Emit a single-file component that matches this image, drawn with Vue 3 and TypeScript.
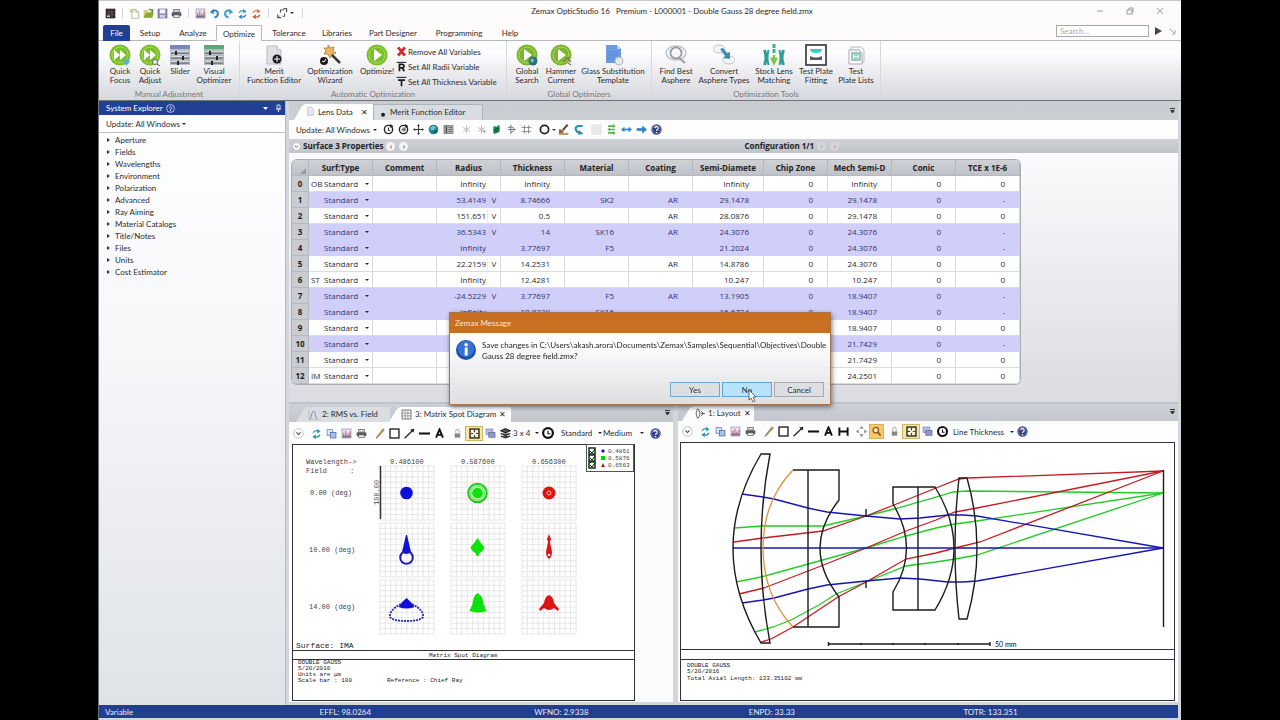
<script setup lang="ts">
import { ref } from 'vue'

const icons: Record<string, string> = {
  app: '<rect x="1" y="1" width="14" height="14" fill="#2c2628"/><path d="M2 6h12M2 10h12M6 2v12M10 2v12" stroke="#6d5f63" stroke-width="1"/><rect x="3" y="11" width="4" height="2" fill="#ddd"/>',
  newFile: '<path d="M4 2h6l4 4v9H4z" fill="#fff" stroke="#9a9a8e"/><path d="M10 2v4h4" fill="none" stroke="#9a9a8e"/><circle cx="4" cy="4" r="3" fill="#b9dd7b"/>',
  open: '<path d="M1 3h5l2 2h6v9H1z" fill="#e3cf6b"/><path d="M1 14l3-7h12l-3 7z" fill="#7fae3a"/><path d="M9 2l5 1-1 4" fill="none" stroke="#3d8b37" stroke-width="2"/>',
  save: '<rect x="1.500" y="1.500" width="13" height="13" fill="#8d83b4" stroke="#6d648e"/><rect x="4" y="2" width="8" height="6" fill="#f4f2fa"/><rect x="4" y="10" width="8" height="4" fill="#d6d2e6"/>',
  print: '<rect x="4" y="2" width="8" height="4" fill="#ddd" stroke="#555"/><rect x="1" y="6" width="14" height="6" rx="1" fill="#565a60"/><rect x="4" y="10" width="8" height="4" fill="#eee" stroke="#555"/>',
  chart: '<rect x="1.500" y="1.500" width="13" height="13" fill="#ece6ee" stroke="#9187a5"/><path d="M4 13V7M7 13V4M10 13V8M13 13V5" stroke="#b5606c" stroke-width="1.500"/><rect x="2" y="11" width="12" height="3" fill="#7d6f91"/>',
  undo: '<path d="M4 5c5-3 9-1 9 3 0 3-2 5-5 6" fill="none" stroke="#2d8cb8" stroke-width="3"/><path d="M1 6l6-5v8z" fill="#2d8cb8"/>',
  redo: '<path d="M12 5C7 2 3 4 3 8c0 3 2 5 5 6" fill="none" stroke="#3ba3cf" stroke-width="3"/><path d="M15 6L9 1v8z" fill="#3ba3cf"/>',
  refresh: '<path d="M3 7q2-4 7-3" fill="none" stroke="#25a3a8" stroke-width="2"/><path d="M9 1l5 4-5 3z" fill="#25a3a8"/><path d="M13 10q-2 4-7 3" fill="none" stroke="#2d8cb8" stroke-width="2"/><path d="M7 9l-5 4 5 3z" fill="#2d8cb8"/>',
  refreshOrange: '<path d="M3 7q2-4 7-3" fill="none" stroke="#dd7a4a" stroke-width="2"/><path d="M9 1l5 4-5 3z" fill="#dd7a4a"/><path d="M13 10q-2 4-7 3" fill="none" stroke="#c7603a" stroke-width="2"/><path d="M7 9l-5 4 5 3z" fill="#c7603a"/>',
  link: '<path d="M1 9v5h5M5 7V3h5M8 12h3V8" fill="none" stroke="#555" stroke-width="1.500"/><path d="M9 1h5v5" fill="none" stroke="#333" stroke-width="1.500"/><path d="M1 14l3-3" stroke="#333"/>',
  focus: '<circle cx="11" cy="11" r="10.500" fill="#7cc028"/><circle cx="11" cy="11" r="8" fill="none" stroke="#a5da62" stroke-width="1"/><path d="M5 6l6 5-6 5zM11 6l6 5-6 5z" fill="#fff"/><path d="M14 17l5-3 2 4-4 4z" fill="#5db4c6"/>',
  adjust: '<circle cx="11" cy="11" r="10.500" fill="#7cc028"/><circle cx="11" cy="11" r="8" fill="none" stroke="#a5da62" stroke-width="1"/><path d="M5 6l6 5-6 5zM11 6l6 5-6 5z" fill="#fff"/><circle cx="16" cy="18" r="2.500" fill="#eef" stroke="#666"/><path d="M18 20l3 2" stroke="#555"/>',
  slider: '<rect x="1" y="1" width="20" height="20" fill="#b9bec6"/><rect x="1" y="1" width="20" height="4" fill="#7488bd"/><path d="M2 8h18M2 13h18M2 18h18" stroke="#fff"/><path d="M2 9h18M2 14h18M2 19h18" stroke="#454b55"/><path d="M7 7v4M14 12v4M9 17v4" stroke="#222" stroke-width="2"/>',
  visual: '<rect x="1" y="1" width="20" height="20" fill="#b4bab9"/><rect x="1" y="1" width="20" height="4" fill="#5aa777"/><path d="M2 8h18M2 13h18M2 18h18" stroke="#fff"/><path d="M2 9h18M2 14h18M2 19h18" stroke="#454b55"/><path d="M7 7v4M14 12v4M9 17v4" stroke="#222" stroke-width="2"/>',
  merit: '<path d="M4 2h10l4 4v14H4z" fill="#e0e1e6" stroke="#b6b8be"/><path d="M14 2v4h4" fill="#fff" stroke="#b6b8be"/><circle cx="14" cy="15" r="4.500" fill="#1b1b1b"/><path d="M11 15h6M14 12v6" stroke="#fff" stroke-width="1"/>',
  wizard: '<path d="M11 9l10 10" stroke="#3b3734" stroke-width="2.500"/><path d="M9 1l2 3 4-1-1 4 3 2-4 1-2 4-2-4-4 0 2-3-2-3 4 0z" fill="#ecb862" stroke="#b5713a" stroke-width=".8"/><circle cx="5" cy="17" r="4" fill="#1b1b1b"/><path d="M3 17l2 1 2-3" stroke="#fff" fill="none"/>',
  optimize: '<circle cx="11" cy="11" r="10.500" fill="#7cc028"/><circle cx="11" cy="11" r="8" fill="none" stroke="#a5da62" stroke-width="1"/><path d="M8 5l8 6-8 6z" fill="#fff"/>',
  globalSearch: '<circle cx="11" cy="11" r="10.500" fill="#7cb62c"/><circle cx="11" cy="11" r="8" fill="none" stroke="#a5da62" stroke-width="1"/><path d="M8 5l8 6-8 6z" fill="#fff"/><circle cx="17" cy="17" r="4.500" fill="#2a6f86"/><path d="M14 16l3-2 1 3-2 2z" fill="#7bc3a7"/>',
  hammer: '<circle cx="11" cy="11" r="10.500" fill="#7cb62c"/><circle cx="11" cy="11" r="8" fill="none" stroke="#a5da62" stroke-width="1"/><path d="M8 5l8 6-8 6z" fill="#fff"/><path d="M13 18l6-5M17 14l4 4M18 19l3 2" stroke="#8a785f" stroke-width="1.500"/>',
  glass: '<path d="M4 1h11l4 4v14H4z" fill="#6a9ae0"/><path d="M15 1v4h4z" fill="#b7d0f3"/><path d="M6 8h10M6 11h10M6 14h10" stroke="#5d8bd3"/><circle cx="17" cy="17" r="4" fill="#e8eaee" stroke="#b3b8c0"/>',
  asphere: '<ellipse cx="11" cy="9" rx="10" ry="7" fill="#eceef0" stroke="#bcc0c4" stroke-width="1.300"/><circle cx="11" cy="9" r="5.500" fill="#f5f7f8" stroke="#8c9196" stroke-width="1.500"/><path d="M14 14l6 5" stroke="#9ba0a5" stroke-width="2"/>',
  convert: '<ellipse cx="6" cy="5" rx="6" ry="4" fill="#f3f4f5" stroke="#bfc3c7"/><ellipse cx="16" cy="16" rx="6" ry="4" fill="#f3f4f5" stroke="#bfc3c7"/><path d="M7 5l3-1 4 5 3-1v7l-7-1 2-2z" fill="#3c8fb0"/>',
  stock: '<path d="M1.500 6q3 8 0 15M20.500 6q-3 8 0 15" stroke="#2f9d98" stroke-width="3" fill="none"/><path d="M5.500 6q-2 8 0 15M16.500 6q2 8 0 15" stroke="#2f9d98" stroke-width="2" fill="none"/><path d="M11 0v9" stroke="#3cb48b" stroke-width="3" stroke-dasharray="4 1"/><path d="M11 11v5M9 15h4l-2 4z" stroke="#7cc542" stroke-width="2.500" fill="#7cc542"/>',
  plate: '<rect x="1" y="1" width="20" height="20" fill="#fff" stroke="#44484d" stroke-width="1.800"/><path d="M5 5h12q0 4-6 4T5 5z" fill="#2fd2c0"/><path d="M5 12q6 3 12 0v4H5z" fill="#565b60"/>',
  lists: '<path d="M6 3h10l3 3v12H6z" fill="#f6f6f8" stroke="#b9bcc2"/><path d="M4 6h10l3 3v11H4z" fill="#fdfdfd" stroke="#a5a9b1"/><rect x="7" y="9" width="8" height="7" fill="#e8f7f4" stroke="#4b8f8a"/><path d="M9 11h4M9 14h4" stroke="#36b9a4"/>',
  remove: '<path d="M3 2l10 12M13 2L3 14" stroke="#cf2a32" stroke-width="4"/>',
  radii: '<path d="M1 2h14" stroke="#222" stroke-width="1.500"/><path d="M5 15V5h4a2.500 2.500 0 0 1 0 5H5M9 10l3 5" fill="none" stroke="#1c1c1c" stroke-width="2.500"/>',
  thick: '<path d="M1 2h14" stroke="#222" stroke-width="1.500"/><path d="M3 6h10M8 6v9" fill="none" stroke="#1c1c1c" stroke-width="2.500"/>',
  rotC: '<circle cx="8" cy="8" r="6" fill="none" stroke="#222" stroke-width="2"/><path d="M8 5v4l2 1" stroke="#222" stroke-width="1.500" fill="none"/><path d="M10 0l5 3-4 3z" fill="#222"/>',
  rotE: '<circle cx="8" cy="8" r="6" fill="none" stroke="#222" stroke-width="2"/><path d="M5 8h6M6 6h4v4H6" stroke="#222" fill="none"/><path d="M10 0l5 3-4 3z" fill="#222"/>',
  plus: '<path d="M8 1v14M1 8h14" stroke="#333" stroke-width="1.500"/><path d="M8 0l2 3H6zM8 16l2-3H6zM0 8l3-2v4zM16 8l-3-2v4z" fill="#333"/>',
  globe: '<circle cx="8" cy="8" r="7" fill="#1d7f9b"/><path d="M3 5l5-3 4 3-4 4-4 0z" fill="#6cc1c9"/><path d="M8 11l4-2 2 1-4 4z" fill="#1d5b45"/>',
  image: '<rect x="1.500" y="2.500" width="13" height="11" fill="#b8b8ba" stroke="#555"/><path d="M8 5h5M8 8h5M8 11h5" stroke="#444"/><path d="M5 3v10" stroke="#444" stroke-width="2"/>',
  starGrey: '<path d="M8 2v12M3 5l10 6M13 5L3 11" stroke="#b5b5b5" stroke-width="1.300"/>',
  starRed: '<path d="M8 2v12M3 5l10 6M13 5L3 11" stroke="#b5b5b5" stroke-width="1.300"/><circle cx="12" cy="11" r="1.800" fill="#d88b97"/>',
  greenBox: '<path d="M4 3l4 1 4-3 1 6-1 5-4 1-4 2-1-6z" fill="#1c8a4c"/><path d="M6 8c1-2 3-2 4 0M10 10c-1 1-3 1-4-1" stroke="#0d4a26" fill="none" stroke-width="1.500"/>',
  solveA: '<path d="M7 1v14M7 4q5 1 5 4t-5 4M3 8h11M3 5h4" stroke="#687178" stroke-width="1.300" fill="none"/>',
  solveB: '<path d="M5 2v12M11 2v12M1 5h14M1 11h14" stroke="#7d858b" stroke-width="1.300" fill="none"/>',
  ring: '<circle cx="8" cy="8" r="6" fill="none" stroke="#222" stroke-width="2.500"/>',
  brush: '<path d="M14 1L7 9" stroke="#5a3d2a" stroke-width="3"/><path d="M2 7l7 4-3 2H1z" fill="#96602f"/><path d="M1 14.500h14" stroke="#b3622f" stroke-width="2"/>',
  swoosh: '<path d="M14 3H8Q3 4 4 8q2 5 7 5" fill="none" stroke="#2a8db0" stroke-width="3"/><path d="M9 9l6 5-7 2z" fill="#2a8db0"/>',
  gridPale: '<rect x="1.500" y="1.500" width="13" height="13" fill="#f1f2f4" stroke="#d2d5d8"/><path d="M2 6h12M2 10h12M6 2v12M10 2v12" stroke="#dadce0"/>',
  greenLines: '<path d="M3 3h8M6 8h7M3 13h8" stroke="#57b847" stroke-width="2.500"/><path d="M10 0l4 3-4 3zM6 5L2 8l4 3zM10 10l4 3-4 3z" fill="#57b847"/>',
  both: '<path d="M3 8h10" stroke="#2e86c9" stroke-width="2.500"/><path d="M5 4L0 8l5 4zM11 4l5 4-5 4z" fill="#2e86c9"/>',
  right: '<path d="M1 8h9" stroke="#2e86c9" stroke-width="4"/><path d="M9 2l7 6-7 6z" fill="#2e86c9"/>',
  help: '<circle cx="8" cy="8" r="7.500" fill="#323d86"/><circle cx="8" cy="8" r="6" fill="none" stroke="#8d96cf"/><path d="M5.500 6a2.500 2.500 0 1 1 3.500 2.500q-1 .5-1 1.500M8 11.500v1.500" fill="none" stroke="#fff" stroke-width="1.700"/>',
  chevron: '<circle cx="8" cy="8" r="7" fill="#fdfdfd" stroke="#aaa"/><path d="M5 6.500l3 3 3-3" fill="none" stroke="#444" stroke-width="1.500"/>',
  copy: '<rect x="1.500" y="2.500" width="8" height="8" fill="#dfe8f7" stroke="#4a6fae"/><rect x="6.500" y="6.500" width="8" height="8" fill="#a9c2e8" stroke="#3d5f9e"/>',
  pencil: '<path d="M13 1L4 13l-1 2 2-1L15 3z" fill="#c8a04f" stroke="#6e5b33" stroke-width=".8"/>',
  rect: '<rect x="1.500" y="1.500" width="13" height="13" fill="none" stroke="#222" stroke-width="2"/>',
  arrow: '<path d="M1 15L12 4" stroke="#222" stroke-width="1.800"/><path d="M9 2l6-1-1 6z" fill="#222"/>',
  line: '<path d="M0 8h16" stroke="#111" stroke-width="3"/>',
  letterA: '<path d="M3 14L8 2l5 12M5 10h6" fill="none" stroke="#111" stroke-width="2.800"/>',
  span: '<path d="M2 2v12M14 2v12M2 8h12" stroke="#111" stroke-width="2.800"/>',
  lock: '<path d="M5.500 8V4.500a2.500 2.500 0 0 1 5 0V8" fill="none" stroke="#b5b8aa" stroke-width="1.500"/><rect x="4" y="8" width="8" height="6" fill="#84887c"/>',
  expand: '<rect x="1.500" y="1.500" width="13" height="13" fill="#fbf3d2" stroke="#222" stroke-width="2"/><path d="M8 3v3M8 10v3M3 8h3M10 8h3" fill="none" stroke="#333" stroke-width="1.600"/>',
  windows: '<rect x="1.500" y="1.500" width="10" height="8" fill="#b8c0dd" stroke="#7a84b5"/><rect x="5.500" y="6.500" width="9" height="7" fill="#8f9ac4" stroke="#5660a0"/>',
  layers: '<path d="M8 1l7 3-7 3-7-3zM1 8l7 3 7-3M1 11.500l7 3 7-3" fill="#555" stroke="#222" stroke-width="1.600"/>',
  clock: '<circle cx="8" cy="8" r="6.500" fill="#fff" stroke="#111" stroke-width="3"/><path d="M8 5v4h3" fill="none" stroke="#111" stroke-width="1.500"/>',
  move: '<path d="M8 0l3 4H5zM8 16l3-4H5zM0 8l4-3v6zM16 8l-4-3v6z" fill="#85888e"/>',
  magnify: '<circle cx="7" cy="6" r="4" fill="#fbe8b4" stroke="#8a5a1d" stroke-width="1.800"/><path d="M10 9l4 5" stroke="#8a5a1d" stroke-width="2.500"/>',
  page: '<path d="M3 1h7l3 3v11H3z" fill="#eef0f5" stroke="#a2a6b0"/><path d="M5 6h6M5 9h6M5 12h6" stroke="#c5c8cf"/>',
  dot: '<circle cx="9" cy="12" r="3.500" fill="#222"/>',
  curve: '<path d="M1.500 1v14H15" fill="none" stroke="#aaa"/><path d="M2 14c4 0 3-11 6-11s2 11 6 11" fill="none" stroke="#7186b8" stroke-width="1.300"/>',
  matrix: '<rect x="1.500" y="1.500" width="13" height="13" fill="#fff" stroke="#444"/><path d="M6 1v14M10 1v14M1 6h14M1 10h14" stroke="#777"/>',
  lens: '<path d="M5 1q-4 7 0 14M6 1q5 7 0 14M10 8h6M10 4l4 4-4 4" fill="none" stroke="#555" stroke-width="1.300"/>',
  info: '<circle cx="8" cy="8" r="8" fill="#1b4fae"/><circle cx="8" cy="7" r="6.500" fill="#3673d3"/><rect x="7" y="6" width="2.300" height="6.500" fill="#fff"/><circle cx="8.100" cy="3.800" r="1.400" fill="#fff"/>',
}

const quick = ['app', '|', 'newFile', 'open', 'save', 'print', '|', 'chart', 'undo', 'redo', 'refresh', 'refreshOrange', '|', 'link', '|']

const menus = [
  { label: 'File', w: 'w27' },
  { label: 'Setup', w: 'w40' },
  { label: 'Analyze', w: 'w46' },
  { label: 'Optimize', w: 'w46' },
  { label: 'Tolerance', w: 'w54' },
  { label: 'Libraries', w: 'w42' },
  { label: 'Part Designer', w: 'w70' },
  { label: 'Programming', w: 'w62' },
  { label: 'Help', w: 'w40' },
]
const activeMenu = ref('Optimize')

interface Tool { icon: string; lines: string[]; w: string }
interface Group { title: string; tools: Tool[]; small?: { icon: string; label: string }[] }
const groups: Group[] = [
  {
    title: 'Manual Adjustment',
    tools: [
      { icon: 'focus', lines: ['Quick', 'Focus'], w: 'w30' },
      { icon: 'adjust', lines: ['Quick', 'Adjust'], w: 'w30' },
      { icon: 'slider', lines: ['Slider'], w: 'w30' },
      { icon: 'visual', lines: ['Visual', 'Optimizer'], w: 'w38' },
    ],
  },
  {
    title: 'Automatic Optimization',
    tools: [
      { icon: 'merit', lines: ['Merit', 'Function Editor'], w: 'w56' },
      { icon: 'wizard', lines: ['Optimization', 'Wizard'], w: 'w56' },
      { icon: 'optimize', lines: ['Optimize!'], w: 'w38' },
    ],
    small: [
      { icon: 'remove', label: 'Remove All Variables' },
      { icon: 'radii', label: 'Set All Radii Variable' },
      { icon: 'thick', label: 'Set All Thickness Variable' },
    ],
  },
  {
    title: 'Global Optimizers',
    tools: [
      { icon: 'globalSearch', lines: ['Global', 'Search'], w: 'w34' },
      { icon: 'hammer', lines: ['Hammer', 'Current'], w: 'w34' },
      { icon: 'glass', lines: ['Glass Substitution', 'Template'], w: 'w70' },
    ],
  },
  {
    title: 'Optimization Tools',
    tools: [
      { icon: 'asphere', lines: ['Find Best', 'Asphere'], w: 'w42' },
      { icon: 'convert', lines: ['Convert', 'Asphere Types'], w: 'w54' },
      { icon: 'stock', lines: ['Stock Lens', 'Matching'], w: 'w46' },
      { icon: 'plate', lines: ['Test Plate', 'Fitting'], w: 'w38' },
      { icon: 'lists', lines: ['Test', 'Plate Lists'], w: 'w42' },
    ],
  },
]

const tree = ['Aperture', 'Fields', 'Wavelengths', 'Environment', 'Polarization', 'Advanced', 'Ray Aiming', 'Material Catalogs', 'Title/Notes', 'Files', 'Units', 'Cost Estimator']

const lensTools = ['rotC', 'rotE', 'plus', 'globe', 'image', '|', 'starGrey', 'starRed', 'greenBox', 'solveA', 'solveB', '|', 'ring', '▾', 'brush', 'swoosh', '|', 'gridPale', 'greenLines', 'both', 'right', 'help']
const spotTools = ['chevron', '|', 'refresh', 'copy', 'chart', 'print', '|', 'pencil', 'rect', 'arrow', 'line', 'letterA', '|', 'lock', 'expand', 'windows', 'layers']
const layoutTools = ['chevron', '|', 'refresh', 'copy', 'chart', 'print', '|', 'pencil', 'rect', 'arrow', 'line', 'letterA', 'span', '|', 'move', 'magnify', '|', 'lock', 'expand', 'windows', 'clock']

const columns = ['Surf:Type', 'Comment', 'Radius', 'Thickness', 'Material', 'Coating', 'Semi-Diamete', 'Chip Zone', 'Mech Semi-D', 'Conic', 'TCE x 1E-6']

interface Row { tag: string; glass: boolean; flag: boolean; cells: string[] }
const row = (tag: string, glass: boolean, flag: boolean, ...cells: string[]): Row => ({ tag, glass, flag, cells })
const rows: Row[] = [
  row('OB', false, false, 'Infinity', 'Infinity', '', '', 'Infinity', '0', 'Infinity', '0', '0'),
  row('', true, true, '53.4149', '8.74666', 'SK2', 'AR', '29.1478', '0', '29.1478', '0', '-'),
  row('', false, true, '151.651', '0.5', '', 'AR', '28.0876', '0', '29.1478', '0', '0'),
  row('', true, true, '36.5343', '14', 'SK16', 'AR', '24.3076', '0', '24.3076', '0', '-'),
  row('', true, false, 'Infinity', '3.77697', 'F5', '', '21.2024', '0', '24.3076', '0', '-'),
  row('', false, true, '22.2159', '14.2531', '', 'AR', '14.8786', '0', '24.3076', '0', '0'),
  row('ST', false, false, 'Infinity', '12.4281', '', '', '10.247', '0', '10.247', '0', '0'),
  row('', true, true, '-24.5229', '3.77697', 'F5', 'AR', '13.1905', '0', '18.9407', '0', '-'),
  row('', true, false, 'Infinity', '10.8339', 'SK16', '', '16.6724', '0', '18.9407', '0', '-'),
  row('', false, false, '', '', '', '', '', '', '18.9407', '0', '0'),
  row('', true, false, '', '', '', '', '', '', '21.7429', '0', '-'),
  row('', false, false, '', '', '', '', '', '', '21.7429', '0', '0'),
  row('IM', false, false, '', '', '', '', '', '', '24.2501', '0', '0'),
]

const status = ['Variable', 'EFFL: 98.0264', 'WFNO: 2.9338', 'ENPD: 33.33', 'TOTR: 133.351']

const gridX = [380, 451, 522]
const gridY = [466, 523, 580]
const steps = [0, 1, 2, 3, 4, 5, 6, 7, 8, 9, 10]
const gridPath = (x: number, y: number) =>
  steps.map((s) => `M${x + s * 5.4} ${y}v54M${x} ${y + s * 5.4}h54`).join('')

const legend = [
  { y: 448, color: '#1010d8', value: '0.4861', shape: 'M601 451l2-2 2 2-2 2z' },
  { y: 455, color: '#00d800', value: '0.5876', shape: 'M601 456h4v4h-4z' },
  { y: 462, color: '#d01414', value: '0.6563', shape: 'M601 467l2-4 2 4z' },
]

const rays = [
  { color: '#22cc22', points: '734,528 762,526 823,526 866,516 894,509 936,497 953,492 967,491 1163,493' },
  { color: '#22cc22', points: '736,582 761,577 819,561 866,548 906,536 936,528 955,524 977,521 1163,493' },
  { color: '#22cc22', points: '755,632 773,627 791,620 819,605 836,594 866,582 906,566 936,562 955,559 977,555 1163,493' },
  { color: '#c81a22', points: '734,542 763,538 823,531 866,516 894,505 936,488 959,479 968,478 1163,471' },
  { color: '#c81a22', points: '739,594 764,588 821,566 866,548 906,531 936,520 955,512 977,508 1163,471' },
  { color: '#c81a22', points: '761,642 771,639 793,627 838,597 866,582 906,559 936,553 955,548 980,542 1163,471' },
  { color: '#1414b4', points: '742,494 763,497 774,499 808,508 827,512 866,516 900,519 920,518 948,515 963,515 977,516 1163,548' },
  { color: '#1414b4', points: '733,548 1163,548' },
  { color: '#1414b4', points: '742,603 763,600 774,598 808,589 827,585 866,581 900,578 920,579 948,582 963,582 977,581 1163,548' },
]
</script>

<template>
  <div class="screen">
    <div class="app">
      <header class="titlebar">
        <div class="quick">
          <template v-for="(q, i) in quick" :key="i">
            <span v-if="q === '|'" class="sep"></span>
            <button v-else class="ico" :class="{ wide: q === 'link' }" :aria-label="q">
              <svg viewBox="0 0 16 16" class="i11" v-html="icons[q]"></svg><span v-if="q === 'link'" class="caret"></span>
            </button>
          </template>
        </div>
        <h1>Zemax OpticStudio 16 &nbsp; Premium - L000001 - Double Gauss 28 degree field.zmx</h1>
        <div class="winbtns">
          <button aria-label="Minimize"><svg viewBox="0 0 8 8"><path d="M1 4h6" stroke="#999" /></svg></button>
          <button aria-label="Restore"><svg viewBox="0 0 8 8"><path d="M1 3h5v4H1zM3 3V1h4v4H6" fill="none" stroke="#999" /></svg></button>
          <button aria-label="Close"><svg viewBox="0 0 8 8"><path d="M1 1l6 6M7 1L1 7" stroke="#999" /></svg></button>
        </div>
      </header>

      <nav class="menus">
        <button v-for="m in menus" :key="m.label" :class="[m.w, { file: m.label === 'File', active: m.label === activeMenu }]" @click="activeMenu = m.label">{{ m.label }}</button>
        <div class="search">
          <input type="search" placeholder="Search..." aria-label="Search" />
          <button aria-label="Go"><svg viewBox="0 0 8 8"><path d="M0 0l7 4-7 4z" fill="#444" /></svg></button>
          <button aria-label="Collapse ribbon"><svg viewBox="0 0 8 8"><path d="M1 2l4 4M6 3v4H3" stroke="#aaa" fill="none" /></svg></button>
        </div>
      </nav>

      <section class="ribbon">
        <div v-for="g in groups" :key="g.title" class="group">
          <div class="tools">
            <button v-for="t in g.tools" :key="t.icon" class="tool" :class="t.w">
              <svg viewBox="0 0 22 22" v-html="icons[t.icon]"></svg>
              <span v-for="l in t.lines" :key="l">{{ l }}</span>
            </button>
            <div v-if="g.small" class="small">
              <button v-for="s in g.small" :key="s.label"><svg viewBox="0 0 16 16" v-html="icons[s.icon]"></svg>{{ s.label }}</button>
            </div>
          </div>
          <h2>{{ g.title }}</h2>
        </div>
      </section>

      <div class="workspace">
        <aside class="explorer">
          <div class="exhead">
            <h2>System Explorer</h2>
            <svg class="i9" viewBox="0 0 16 16"><circle cx="8" cy="8" r="7" fill="none" stroke="#cdd6f2" stroke-width="1.500" /><path d="M6 6a2 2 0 1 1 2 3v1M8 11v2" fill="none" stroke="#fff" stroke-width="1.500" /></svg>
            <span class="grow"></span>
            <button aria-label="Panel menu"><svg viewBox="0 0 8 8"><path d="M2 3h5L4.500 6z" fill="#fff" /></svg></button>
            <button aria-label="Pin panel"><svg viewBox="0 0 8 8"><path d="M3 1h3v4H3zM2 5h5M4.500 5v3" fill="none" stroke="#dde" /></svg></button>
          </div>
          <label class="pick update"><select aria-label="Update"><option>Update: All Windows</option></select></label>
          <ul>
            <li v-for="t in tree" :key="t"><button><span class="tri"></span>{{ t }}</button></li>
          </ul>
        </aside>

        <main>
          <section class="lens">
            <div class="tabs">
              <button class="tab active t75"><svg class="i9" viewBox="0 0 16 16" v-html="icons.page"></svg>Lens Data<span class="close">✕</span></button>
              <button class="tab second t108"><svg class="i9" viewBox="0 0 16 16" v-html="icons.dot"></svg>Merit Function Editor</button>
              <span class="grow"></span><span class="drop"></span>
            </div>
            <div class="bar">
              <label class="pick wupd"><select aria-label="Update lens data"><option>Update: All Windows</option></select></label>
              <template v-for="(q, i) in lensTools" :key="i">
                <span v-if="q === '|'" class="gap"></span>
                <span v-else-if="q === '▾'" class="caret tight"></span>
                <button v-else class="ico" :aria-label="q"><svg viewBox="0 0 16 16" class="i11" v-html="icons[q]"></svg></button>
              </template>
            </div>
            <div class="props">
              <button aria-label="Expand properties"><svg class="i9" viewBox="0 0 16 16" v-html="icons.chevron"></svg></button>
              <strong>Surface 3 Properties</strong>
              <button class="round" aria-label="Previous surface">‹</button><button class="round" aria-label="Next surface">›</button>
              <strong class="config">Configuration 1/1</strong>
              <button class="round dim" aria-label="Previous configuration">‹</button><button class="round dim" aria-label="Next configuration">›</button>
            </div>
            <div class="sheet">
              <table>
                <colgroup><col class="c17" /><col v-for="(c, i) in columns" :key="c" :class="i === 6 ? 'c71' : 'c64'" /></colgroup>
                <thead>
                  <tr><th class="corner"><svg viewBox="0 0 6 6"><path d="M6 0v6H0z" fill="#999" /></svg></th><th v-for="c in columns" :key="c" scope="col"><div>{{ c }}</div></th></tr>
                </thead>
                <tbody>
                  <tr v-for="(r, n) in rows" :key="n" :class="{ glass: r.glass }">
                    <th scope="row">{{ n }}</th>
                    <td><div class="type"><span class="tag">{{ r.tag }}</span><label class="pick"><select :aria-label="'Surface ' + n + ' type'"><option>Standard</option></select></label></div></td>
                    <td></td>
                    <td v-for="(c, i) in r.cells" :key="i"><div class="cell"><span>{{ c }}</span><i>{{ i === 0 && r.flag ? 'V' : '' }}</i></div></td>
                  </tr>
                </tbody>
              </table>
            </div>
          </section>

          <div class="panes">
            <section class="pane">
              <div class="tabs low">
                <button class="tab t100"><svg class="i11" viewBox="0 0 16 16" v-html="icons.curve"></svg>2: RMS vs. Field</button>
                <button class="tab active t119"><svg class="i11" viewBox="0 0 16 16" v-html="icons.matrix"></svg>3: Matrix Spot Diagram<span class="close">✕</span></button>
                <span class="grow"></span><span class="drop"></span>
              </div>
              <div class="bar tall">
                <template v-for="(q, i) in spotTools" :key="i">
                  <span v-if="q === '|'" class="gap"></span>
                  <button v-else class="ico" :class="{ lit: q === 'expand' }" :aria-label="q"><svg viewBox="0 0 16 16" class="i11" v-html="icons[q]"></svg></button>
                </template>
                <label class="pick w27"><select aria-label="Grid size"><option>3 x 4</option></select></label>
                <button class="ico" aria-label="Refresh timer"><svg viewBox="0 0 16 16" class="i12" v-html="icons.clock"></svg></button>
                <span class="gap"></span><span class="gap"></span>
                <label class="pick w42"><select aria-label="Style"><option>Standard</option></select></label>
                <label class="pick w42"><select aria-label="Size"><option>Medium</option></select></label>
                <span class="gap"></span>
                <button class="ico" aria-label="Help"><svg viewBox="0 0 16 16" class="i11" v-html="icons.help"></svg></button>
              </div>
              <div class="plot spot">
                <svg viewBox="292 444 343 258" role="img" aria-label="Matrix Spot Diagram">
                  <rect x="292.500" y="444.500" width="342" height="256" fill="#fff" stroke="#333" />
                  <g class="m7" fill="#444">
                    <text x="306" y="464">Wavelength-&gt;</text><text x="306" y="473">Field</text><text x="350" y="473">:</text>
                    <text x="390" y="464">0.486100</text><text x="461" y="464">0.587600</text><text x="532" y="464">0.656300</text>
                    <text x="310" y="495">0.00 (deg)</text><text x="309" y="552">10.00 (deg)</text><text x="309" y="609">14.00 (deg)</text>
                    <text transform="translate(379 505) rotate(-90)">100.00</text>
                  </g>
                  <template v-for="y in gridY" :key="y"><path v-for="x in gridX" :key="x" :d="gridPath(x, y)" fill="none" stroke="#e2e0df" stroke-width=".8" /></template>
                  <path d="M380.500 466v53" stroke="#333" stroke-width="1.500" />
                  <g fill="#0f0fdc">
                    <circle cx="406.500" cy="493" r="6.300" />
                    <path d="M406 535h1l4 17q-5 4-9 0z" />
                    <path d="M406.500 598q5 4 8 9-8 3-16 0 3-5 8-9z" />
                    <circle cx="406.500" cy="557.500" r="6.300" fill="none" stroke="#1a1ab8" stroke-width="2" />
                    <path d="M401 604q-12 6-11 13 3 4 16.500 4t16.500-4q1-7-11-13" fill="none" stroke="#2626a8" stroke-width="1.800" stroke-dasharray="2 1" />
                  </g>
                  <g fill="#0be20b">
                    <circle cx="477.500" cy="493" r="9.300" fill="#c4f7bd" stroke="#22c822" stroke-width="2" /><circle cx="477.500" cy="493" r="7" fill="none" stroke="#5fdc5a" /><circle cx="477.500" cy="493" r="5.300" />
                    <path d="M477.500 538q3 5 7 9-1 4-5 6l-1 3h-2l-1-3q-4-2-5-6 4-4 7-9z" />
                    <path d="M477.500 593q5 2 6 11l3 7q-8 3-17 0l3-7q1-9 5-11z" />
                  </g>
                  <g fill="#de1414">
                    <circle cx="549" cy="493" r="6.500" /><circle cx="549" cy="493" r="2" fill="none" stroke="#ffb9b9" />
                    <path d="M549 534l2 5-1 3 2 10q0 5-3 7-3-2-3-7l2-10-1-3z" /><circle cx="549" cy="555" r="1.300" fill="#fff" />
                    <path d="M549 595q4 1 5 8l5 6-1 2-4-3q-5 4-10 0l-4 3-1-2 5-6q1-7 5-8z" />
                  </g>
                  <rect x="586.500" y="444.500" width="47" height="27" fill="#fff" stroke="#555" />
                  <g v-for="l in legend" :key="l.y">
                    <rect x="589" :y="l.y" width="6" height="6" fill="#fff" stroke="#123012" stroke-width="1.500" /><path :d="`M590 ${l.y + 3}l2 2 3-4`" fill="none" stroke="#111" />
                    <path :d="l.shape" :fill="l.color" /><text x="608" :y="l.y + 5" class="m6" fill="#444">{{ l.value }}</text>
                  </g>
                  <path d="M292 650.500h343M292 659.500h343" stroke="#333" />
                  <text x="296" y="648" class="m8" fill="#222">Surface: IMA</text>
                  <g class="m6" fill="#222">
                    <text x="429" y="657">Matrix Spot Diagram</text>
                    <text x="298" y="664">DOUBLE GAUSS</text><text x="298" y="670">5/20/2016</text><text x="298" y="676">Units are µm</text>
                    <text x="298" y="682" xml:space="preserve">Scale bar  : 100</text><text x="387" y="682" xml:space="preserve">Reference  : Chief Ray</text>
                  </g>
                </svg>
              </div>
            </section>

            <section class="pane">
              <div class="tabs low short">
                <button class="tab active t73"><svg class="i11" viewBox="0 0 16 16" v-html="icons.lens"></svg>1: Layout<span class="close">✕</span></button>
                <span class="grow"></span><span class="drop"></span>
              </div>
              <div class="bar mid">
                <template v-for="(q, i) in layoutTools" :key="i">
                  <span v-if="q === '|'" class="gap"></span>
                  <button v-else class="ico" :class="{ lit: q === 'expand', warm: q === 'magnify' }" :aria-label="q"><svg viewBox="0 0 16 16" class="i11" v-html="icons[q]"></svg></button>
                </template>
                <span class="gap"></span>
                <label class="pick w62"><select aria-label="Line thickness"><option>Line Thickness</option></select></label>
                <button class="ico" aria-label="Help"><svg viewBox="0 0 16 16" class="i11" v-html="icons.help"></svg></button>
              </div>
              <div class="plot">
                <svg viewBox="680 442 496 260" role="img" aria-label="Lens layout">
                  <rect x="680.500" y="442.500" width="494" height="258" fill="#fff" stroke="#333" />
                  <g fill="none" stroke-width="1.300">
                    <polyline v-for="(r, i) in rays" :key="i" :points="r.points" :stroke="r.color" />
                    <path d="M793 470q-30 31-30 78t30 79" stroke="#e0913a" />
                    <g stroke="#1c1c1c" stroke-width="1.400">
                      <path d="M761 454h9q-18 94 0 189h-9q-56-95 0-189z" />
                      <path d="M793 470h46v30q-38 48 0 97v30h-46M808 470v157" />
                      <path d="M893 487h42q38 61 0 123h-42v-18q27-44 0-88zM918 487v123" />
                      <path d="M959 478h8q20 70 0 141h-8q-8-71 0-141z" />
                      <path d="M866 509v8M866 581v7M1163.500 470v157" />
                      <path d="M828 644h162M828.500 642v4M861 643v2M893 643v2M925 643v2M958 643v2M990 642v4" />
                    </g>
                  </g>
                  <text x="995" y="647" class="s7">50 mm</text>
                  <path d="M680 649.500h495M680 659.500h495" stroke="#333" />
                  <g class="m6" fill="#222">
                    <text x="687" y="667">DOUBLE GAUSS</text><text x="687" y="673">5/20/2016</text><text x="687" y="680" xml:space="preserve">Total Axial Length:  133.35102 mm</text>
                  </g>
                </svg>
              </div>
            </section>
          </div>
        </main>
      </div>

      <footer><span v-for="s in status" :key="s">{{ s }}</span></footer>

      <div class="overlay">
        <div class="dialog" role="dialog" aria-labelledby="dlg-title">
          <h2 id="dlg-title">Zemax Message</h2>
          <div class="message">
            <svg viewBox="0 0 16 16" v-html="icons.info"></svg>
            <p>Save changes in C:\Users\akash.arora\Documents\Zemax\Samples\Sequential\Objectives\Double<br />Gauss 28 degree field.zmx?</p>
          </div>
          <div class="actions">
            <button class="default">Yes</button>
            <button class="hover">No<svg class="pointer" viewBox="0 0 9 13"><path d="M1 1v10l2-2 2 4 2-1-2-4h3z" fill="#fff" stroke="#444" stroke-width=".8" /></svg></button>
            <button>Cancel</button>
          </div>
        </div>
      </div>
    </div>
  </div>
</template>

<style>
body { margin: 0; background: #000; }
</style>

<style scoped>
* { box-sizing: border-box; }
.screen { min-height: 100vh; padding: 0 99px 0 98px; background: #000; display: flex; font-family: Lato, "Open Sans", sans-serif; font-size: 8px; line-height: 12px; color: #2c2c2e; }
.app { position: relative; flex: 1; min-width: 0; display: flex; flex-direction: column; background: #d3d7dd; border-left: 1px solid #6f747c; }
button, select, input { font: inherit; color: inherit; margin: 0; padding: 0; border: 0; background: none; border-radius: 0; }
button { display: inline-flex; align-items: center; justify-content: center; white-space: nowrap; cursor: default; }
h1, h2, p, ul { margin: 0; padding: 0; font-size: inherit; font-weight: 400; }
ul { list-style: none; }
svg { display: block; flex: none; }
.grow { flex: 1; }
.i9 { width: 9px; height: 9px; }
.i11 { width: 11px; height: 11px; }
.i12 { width: 12px; height: 12px; }
.w27 { width: 27px; } .w30 { width: 30px; } .w34 { width: 34px; } .w38 { width: 38px; } .w40 { width: 40px; }
.w42 { width: 42px; } .w46 { width: 46px; } .w54 { width: 54px; } .w56 { width: 56px; }
.w62 { width: 62px; } .w70 { width: 70px; }

.titlebar { height: 25px; display: grid; grid-template-columns: 1fr auto 1fr; align-items: center; background: #fefbfc; border-top: 1px solid #c9c9c9; }
.titlebar h1 { padding-bottom: 5px; white-space: nowrap; margin-left: 64px; }
.quick { display: flex; align-items: center; padding-left: 4px; }
.quick .ico { width: 14px; height: 14px; }
.quick .wide { width: 24px; }
.sep { width: 1px; height: 10px; margin: 0 4px 0 5px; background: #d5d5d8; }
.caret { width: 0; height: 0; margin-left: 2px; border: 2px solid transparent; border-top-color: #333; border-bottom: 0; }
.tight { margin: 0; }
.winbtns { display: flex; justify-content: flex-end; gap: 22px; padding: 0 17px 4px 0; }
.winbtns svg, .search svg, .exhead button svg { width: 8px; height: 8px; }

.menus { height: 16px; display: flex; padding-left: 4px; background: #fefbfc; border-bottom: 1px solid #b4b8c0; }
.menus > button { height: 16px; }
.menus .file { color: #fff; background: #213f93; border-radius: 2px 2px 0 0; }
.menus .active { background: #fff; border: 1px solid #b4b8c0; border-bottom: 0; }
.search { margin-left: auto; display: flex; align-items: center; gap: 6px; padding: 0 4px 3px 0; }
.search input { width: 93px; height: 12px; padding: 0 3px; border: 1px solid #a8a8aa; background: #fff; }
.search input::placeholder { color: #a8a8a8; opacity: 1; }

.ribbon { height: 60px; display: flex; background: linear-gradient(#fdfcfd 20%, #eeeef1 50%, #d6d8dd); border-bottom: 1px solid #6f747a; }
.group { display: flex; flex-direction: column; padding: 3px 6px 0; border-right: 1px solid #d5d7dc; }
.group:nth-child(n+3) { padding: 3px 3px 0; }
.tools { display: flex; height: 44px; align-items: flex-start; }
.tool { flex-direction: column; line-height: 9px; }
.tool svg { width: 22px; height: 22px; margin-bottom: 1px; }
.small { display: flex; flex-direction: column; align-items: flex-start; width: 104px; }
.small button { height: 15px; }
.small svg { width: 11px; height: 11px; margin-right: 1px; }
.group h2 { text-align: center; color: #77797e; }

.workspace { flex: 1; display: flex; gap: 3px; min-height: 0; padding-right: 3px; }
.explorer { width: 187px; flex: none; background: linear-gradient(#fff, #f6f7f9 40%, #dfe2e7); border-right: 1px solid #b5b9c0; }
.exhead { height: 14px; display: flex; align-items: center; gap: 3px; padding: 0 2px 0 7px; color: #fff; background: #213f93; }
.exhead button { width: 10px; }
.pick { position: relative; display: inline-flex; align-items: center; }
.pick select { appearance: none; width: 100%; outline: none; }
.pick::after { content: ""; position: absolute; right: 1px; top: 50%; margin-top: -1px; border: 2px solid transparent; border-top-color: #222; border-bottom: 0; pointer-events: none; }
.update { width: 81px; height: 17px; margin-left: 7px; }
.explorer ul { border-top: 1px solid #bcc0c8; padding-top: 1px; }
.explorer li { height: 12px; display: flex; }
.explorer li button { padding-left: 8px; }
.tri { width: 0; height: 0; margin-right: 5px; border: 2px solid transparent; border-left: 3px solid #333; border-right: 0; }

main { flex: 1; min-width: 0; display: flex; flex-direction: column; }
.tabs { height: 19px; display: flex; align-items: flex-end; padding-left: 5px; background: linear-gradient(#c8cbd0, #cdd0d5); }
.tab { height: 16px; gap: 3px; padding: 0 0 1px 12px; justify-content: flex-start; background: #dadde1; clip-path: polygon(0 100%, 8px 2px, 11px 0, 100% 0, 100% 100%); }
.tab.second { clip-path: none; background: #d9dce0; border: 1px solid #aeb2b9; border-bottom: 0; padding-left: 4px; border-radius: 0 2px 0 0; }
.tab.active { background: #fdfdfe; }
.close { margin-left: auto; margin-right: 5px; }
.t75 { width: 79px; } .t108 { width: 110px; } .t100 { width: 94px; } .t119 { width: 122px; margin-left: -1px; } .t73 { width: 72px; }
.drop { width: 5px; height: 6px; margin: 0 3px 6px; border-top: 1px solid #333; }
.drop::after { content: ""; display: block; margin-top: 1px; border: 2px solid transparent; border-top: 3px solid #333; border-bottom: 0; }
.bar { height: 19px; display: flex; align-items: center; background: #fdfdfe; padding-left: 2px; }
.bar .ico { width: 15px; height: 15px; flex: none; }
.gap { width: 3px; flex: none; }
.bar .lit { width: 18px; background: #f5e6a8; border: 1px solid #cdb85f; }
.bar .warm { background: #f9c869; border: 1px solid #dcae5c; }
.wupd { width: 82px; margin: 0 3px 0 5px; flex: none; }
.props { height: 14px; display: flex; align-items: center; padding-left: 3px; background: linear-gradient(#cfd1d5, #c0c3c8); color: #222; font-family: "Open Sans", sans-serif; }
.props strong { margin: 0 3px 0 2px; }
.props .config { margin-left: 332px; }
.round { width: 9px; height: 9px; margin-right: 4px; border-radius: 50%; background: #f4f4f5; line-height: 8px; }
.dim { color: #999; background: #d3d5d9; }
.sheet { padding: 7px 3px 18px; background: linear-gradient(#fbfbfd, #dadce1); }
table { width: 728px; border-collapse: separate; border-spacing: 0; table-layout: fixed; background: #fff; border-radius: 5px; overflow: hidden; box-shadow: 0 0 0 1px #a9adb4; font-family: "Open Sans", sans-serif; font-size: 8px; }
.c17 { width: 17px; } .c64 { width: 64px; } .c71 { width: 71px; }
th, td { height: 16px; padding: 0; border-right: 1px solid #d8d8dc; border-bottom: 1px solid #dcdce0; overflow: hidden; white-space: nowrap; }
th { font-weight: 700; color: #222; background: #c9ccd1; border-color: #b5b8be; }
thead th { background: linear-gradient(#cfd1d5, #bfc2c8); }
thead th div { display: flex; justify-content: center; }
.corner svg { width: 6px; height: 6px; margin: 6px 0 0 8px; }
.cell { display: flex; height: 15px; align-items: center; }
.cell span { flex: 1; text-align: right; padding-right: 1px; }
.cell i { width: 13px; font-style: normal; text-align: center; border-left: 1px solid #ececf0; }
.glass td { background: #cfcffa; border-color: #cfcffa; color: #34346e; }
.glass .cell i { border-color: transparent; }
.type { display: flex; align-items: center; padding-left: 2px; }
.tag { width: 11px; margin-right: 2px; }
.type .pick { width: 46px; }

.panes { display: grid; grid-template-columns: 384fr 500fr; column-gap: 5px; border-top: 2px solid #c0c4ca; padding-bottom: 3px; }
.pane { min-width: 0; }
.low { height: 18px; padding-left: 7px; background: linear-gradient(#cdd0d6, #c3c6cc); }
.short { height: 17px; padding-left: 4px; }
.low .tab { height: 15px; }
.tall { height: 22px; }
.mid { height: 21px; }
.plot svg { width: 100%; height: auto; }
.plot { background: #fcfcfd; padding: 0 2px; }
.spot { padding: 0 38px 0 3px; }
.m6, .m7, .m8 { font-family: "Liberation Mono", monospace; }
.m6 { font-size: 6px; } .m7 { font-size: 7px; } .m8 { font-size: 8px; } .s7 { font-size: 7px; }

footer { height: 13px; margin: 0 3px 2px 0; display: grid; grid-template-columns: repeat(5, 1fr); align-items: center; padding-left: 6px; color: #e6ebfa; background: #213f8f; }

.overlay { position: fixed; inset: 0; display: flex; align-items: center; justify-content: center; padding-bottom: 3px; }
.dialog { width: 382px; background: linear-gradient(#fff 30%, #dedfe2); border: 1px solid #a7744c; box-shadow: 1px 2px 5px rgba(0, 0, 0, .5); }
.dialog h2 { height: 20px; padding-left: 5px; line-height: 20px; color: #fbe6d4; background: #c96f22; }
.message { display: flex; gap: 6px; padding: 7px 6px 0; height: 49px; line-height: 11px; white-space: nowrap; color: #1f1f21; }
.message svg { width: 20px; height: 20px; }
.actions { display: flex; justify-content: flex-end; gap: 2px; padding: 0 6px 7px 0; }
.actions button { position: relative; width: 50px; height: 15px; border: 1px solid #a5abb3; background: #dcdee2; }
.actions .default { border-color: #6fa9cf; }
.actions .hover { background: #b8e2f8; border-color: #5fa6d3; }
.pointer { position: absolute; left: 25px; top: 6px; width: 9px; height: 13px; }
</style>
